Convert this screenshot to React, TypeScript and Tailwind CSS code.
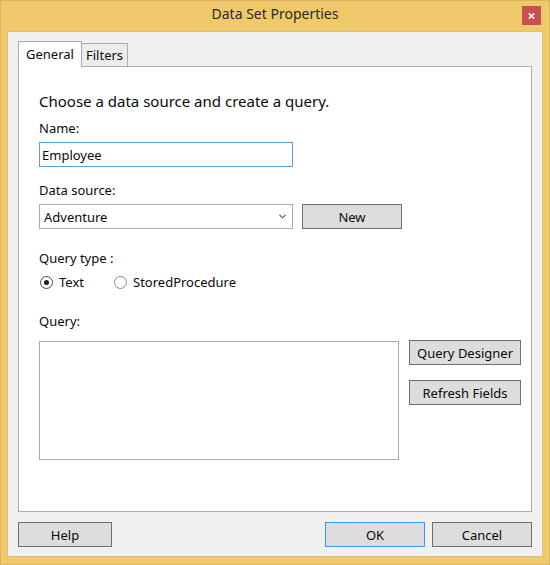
import React from "react";

const F = "font-['Noto_Sans',sans-serif]";

function Btn({ label, w, blue }: { label: string; w: string; blue?: boolean }) {
  return (
    <div
      className={`${w} h-[25px] flex items-center justify-center bg-[#dddddd] border ${
        blue ? "border-[#3399ff]" : "border-[#707070]"
      } text-[13px] leading-[18px] text-[#0a0a0a]`}
    >
      {label}
    </div>
  );
}

function Radio({ checked, label }: { checked?: boolean; label: string }) {
  return (
    <div className="flex items-center">
      <div
        className={`w-[13px] h-[13px] rounded-full border bg-white flex items-center justify-center ${
          checked ? "border-[#4a4a4a]" : "border-[#8c8c8c]"
        }`}
      >
        {checked && <div className="w-[5px] h-[5px] rounded-full bg-[#1f1f1f]" />}
      </div>
      <span className="ml-[6px] text-[13px] leading-[18px]">{label}</span>
    </div>
  );
}

export default function App() {
  return (
    <div
      className={`${F} w-[550px] h-[565px] bg-[#f0c96b] border border-[#dab45e] flex flex-col text-[#0a0a0a]`}
    >
      {/* Title bar */}
      <div className="relative h-[30px] flex justify-center pt-[3px]">
        <span className="text-[14px] leading-[20px] text-[#2a2a2a]">Data Set Properties</span>
        <div className="absolute top-[5px] right-[8px] w-[19px] h-[19px] bg-[#c75050] flex items-center justify-center">
          <svg width="7" height="6" viewBox="0 0 7 6">
            <path d="M0.8 0.5 L6.2 5.5 M6.2 0.5 L0.8 5.5" stroke="#fff" strokeWidth="1.6" />
          </svg>
        </div>
      </div>

      {/* Client area */}
      <div className="mx-[6px] h-[526px] bg-[#f0f0f0] border border-[#dcc07a] flex flex-col px-[10px] pt-[9px]">
        {/* Tabs */}
        <div className="h-[25px] flex items-end">
          <div className="relative z-10 -mb-[1px] w-[64px] h-[26px] bg-white border border-b-0 border-[#acacac] pl-[7px] pt-[3px] text-[13px] leading-[18px]">
            General
          </div>
          <div className="w-[46px] h-[23px] bg-[#ececec] border border-l-0 border-b-0 border-[#acacac] pl-[4px] pt-[2px] text-[13px] leading-[18px]">
            Filters
          </div>
        </div>

        {/* Panel */}
        <div className="h-[446px] bg-white border border-[#acacac] pl-[20px] pt-[24px] flex flex-col">
          <div className="text-[15px] leading-[20px]">Choose a data source and create a query.</div>
          <div className="mt-[8px] text-[13px] leading-[18px]">Name:</div>
          <div className="mt-[5px] w-[254px] h-[25px] border border-[#569de5] flex items-center pl-[2px] text-[13px] leading-[18px]">
            Employee
          </div>
          <div className="mt-[14px] text-[13px] leading-[18px]">Data source:</div>
          <div className="mt-[5px] flex gap-[9px]">
            <div className="w-[254px] h-[25px] border border-[#acacac] flex items-center justify-between pl-[4px] pr-[6px] text-[13px] leading-[18px]">
              <span className="pt-[1px]">Adventure</span>
              <svg width="7" height="5" viewBox="0 0 7 5">
                <path d="M0.5 0.8 L3.5 3.8 L6.5 0.8" stroke="#555" strokeWidth="1.1" fill="none" />
              </svg>
            </div>
            <Btn label="New" w="w-[100px]" />
          </div>
          <div className="mt-[20px] text-[13px] leading-[18px]">Query type :</div>
          <div className="mt-[6px] h-[18px] flex items-center pl-[1px]">
            <div className="w-[74px]">
              <Radio checked label="Text" />
            </div>
            <Radio label="StoredProcedure" />
          </div>
          <div className="mt-[21px] text-[13px] leading-[18px]">Query:</div>
          <div className="mt-[10px] flex items-start gap-[10px]">
            <div className="mt-[1px] w-[360px] h-[119px] border border-[#ababab]" />
            <div className="flex flex-col gap-[15px]">
              <Btn label="Query Designer" w="w-[112px]" />
              <Btn label="Refresh Fields" w="w-[112px]" />
            </div>
          </div>
        </div>

        {/* Bottom buttons */}
        <div className="mt-[10px] flex justify-between">
          <Btn label="Help" w="w-[94px]" />
          <div className="flex gap-[7px]">
            <Btn label="OK" w="w-[100px]" blue />
            <Btn label="Cancel" w="w-[100px]" />
          </div>
        </div>
      </div>
    </div>
  );
}
